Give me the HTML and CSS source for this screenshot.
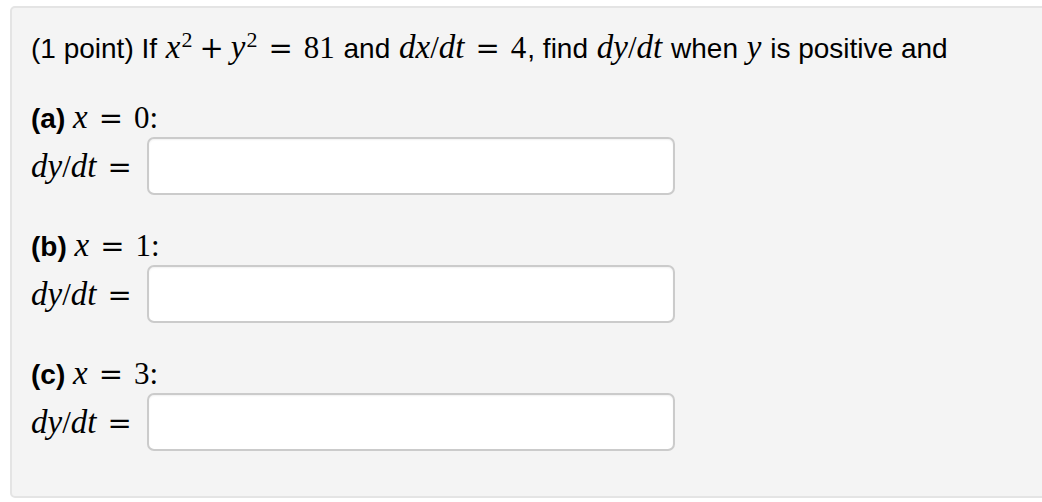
FILE: index.html
```html
<!DOCTYPE html>
<html>
<head>
<meta charset="utf-8">
<link rel="stylesheet" href="styles.css">
</head>
<body>
<div class="problem">
  <p class="intro">(1 point) If <span class="m"><i>x</i><sup>2</sup><span class="op">+</span><i>y</i><sup>2</sup><span class="rel">=</span>81</span> and <span class="m"><i>dx</i>/<i>dt</i><span class="rel">=</span>4</span>, find <span class="m"><i>dy</i>/<i>dt</i></span> when <span class="m"><i>y</i></span> is positive and</p>

  <div class="part">
    <div class="label"><b>(a)</b> <span class="m"><i>x</i><span class="rel">=</span>0:</span></div>
    <div class="row"><span class="m"><i>dy</i>/<i>dt</i><span class="rel last">=</span></span><input class="answer" type="text"></div>
  </div>

  <div class="part">
    <div class="label"><b>(b)</b> <span class="m"><i>x</i><span class="rel">=</span>1:</span></div>
    <div class="row"><span class="m"><i>dy</i>/<i>dt</i><span class="rel last">=</span></span><input class="answer" type="text"></div>
  </div>

  <div class="part">
    <div class="label"><b>(c)</b> <span class="m"><i>x</i><span class="rel">=</span>3:</span></div>
    <div class="row"><span class="m"><i>dy</i>/<i>dt</i><span class="rel last">=</span></span><input class="answer" type="text"></div>
  </div>
</div>
</body>
</html>
```

FILE: styles.css
```css
html, body {
  margin: 0;
  padding: 0;
  background: #ffffff;
}

body {
  font-family: "Liberation Sans", Arial, sans-serif;
  font-size: 28px;
  color: #000;
}

.problem {
  margin: 6px 0 0 10px;
  width: 1060px;
  box-sizing: border-box;
  height: 492px;
  background: #f4f4f4;
  border: 2px solid #e4e4e4;
  border-radius: 5px;
  padding: 22px 0 0 19px;
}

.intro {
  margin: 0;
  height: 34px;
  line-height: 34px;
  white-space: nowrap;
}

.intro .m {
  margin: 0 1px;
}

.m {
  font-family: "Liberation Serif", "Times New Roman", serif;
  font-size: 31px;
}

.m i {
  font-style: italic;
  font-size: 33px;
}

.m sup {
  font-size: 22px;
  vertical-align: 0.48em;
  line-height: 0;
  margin-left: 1px;
}

.op,
.rel {
  font-family: "DejaVu Serif", serif;
  font-size: 29px;
}

.op {
  margin: 0 0.24em;
}

.rel {
  margin: 0 0.38em;
}

.rel.last {
  margin-right: 0;
}

.part {
  margin-top: 36px;
}

.part + .part {
  margin-top: 33px;
}

.label {
  height: 34px;
  line-height: 34px;
  white-space: nowrap;
}

.label b {
  font-weight: bold;
}

.row {
  display: flex;
  align-items: center;
  gap: 15px;
  margin-top: 3px;
  height: 58px;
}

.answer {
  width: 528px;
  height: 58px;
  box-sizing: border-box;
  border: 2px solid #cbcbcb;
  border-radius: 7px;
  background: #ffffff;
  box-shadow: inset 0 1px 2px rgba(0, 0, 0, 0.06);
  margin: 0;
  padding: 0 12px;
  font-size: 27px;
}
```
